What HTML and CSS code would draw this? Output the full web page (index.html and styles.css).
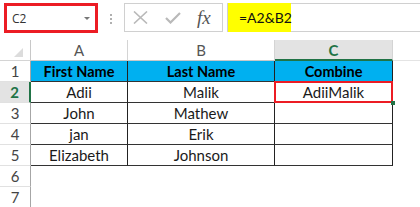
FILE: index.html
```html
<!DOCTYPE html>
<html lang="en">
<head>
  <meta charset="UTF-8" />
  <title>Combine cells</title>
  <link rel="stylesheet" href="styles.css">
</head>
<body>
  <div class="toolbar">
    <div class="namebox"><span>C2</span><i class="caret"></i></div>
    <div class="grip"><i></i><i></i><i></i></div>
    <div class="fxbox">
      <svg class="ico-x" width="15" height="13" viewBox="0 0 15 13"><path d="M1 0.5 L14 12.5 M14 0.5 L1 12.5" stroke="#b9b9b9" stroke-width="1.6" fill="none"/></svg>
      <svg class="ico-ok" width="16" height="12" viewBox="0 0 16 12"><path d="M1 6 L5.5 10.5 L15 1" stroke="#b9b9b9" stroke-width="2.2" fill="none"/></svg>
      <span class="fx">fx</span>
    </div>
    <div class="formula"><span class="hl">=A2&amp;B2</span></div>
  </div>

  <div class="sheet">
    <div class="corner"><i></i></div>
    <div class="ch">A</div>
    <div class="ch">B</div>
    <div class="ch active">C</div>
    <div class="ch blank"></div>

    <div class="rh">1</div>
    <div class="cell head">First Name</div>
    <div class="cell head">Last Name</div>
    <div class="cell head">Combine</div>
    <div class="off"></div>

    <div class="rh active">2</div>
    <div class="cell">Adii</div>
    <div class="cell">Malik</div>
    <div class="cell sel">AdiiMalik</div>
    <div class="off"></div>

    <div class="rh">3</div>
    <div class="cell">John</div>
    <div class="cell">Mathew</div>
    <div class="cell"></div>
    <div class="off"></div>

    <div class="rh">4</div>
    <div class="cell">jan</div>
    <div class="cell">Erik</div>
    <div class="cell"></div>
    <div class="off"></div>

    <div class="rh">5</div>
    <div class="cell">Elizabeth</div>
    <div class="cell">Johnson</div>
    <div class="cell"></div>
    <div class="off"></div>

    <div class="rh">6</div>
    <div class="off"></div><div class="off"></div><div class="off"></div><div class="off"></div>

    <div class="rh">7</div>
    <div class="off"></div><div class="off"></div><div class="off"></div><div class="off"></div>
  </div>
</body>
</html>
```

FILE: styles.css
```css
body {
  margin: 0;
  width: 420px;
  height: 207px;
  overflow: hidden;
  background: #fff;
  font-family: "Lato", "Liberation Sans", sans-serif;
  color: #222;
}
.toolbar {
  display: flex;
  align-items: flex-start;
  height: 40px;
  padding-top: 3px;
  box-sizing: border-box;
}
.namebox {
  display: flex;
  align-items: center;
  box-sizing: border-box;
  margin-left: 4px;
  width: 94px;
  height: 30px;
  border: 3px solid #ec1c24;
  padding-left: 5px;
  font-family: "Open Sans", sans-serif;
  font-size: 12px;
  color: #333;
}
.caret {
  margin-left: auto;
  margin-right: 5px;
  border-left: 3px solid transparent;
  border-right: 3px solid transparent;
  border-top: 3px solid #777;
}
.grip {
  display: flex;
  flex-direction: column;
  gap: 2px;
  margin: 11px 0 0 12px;
}
.grip i {
  width: 2px;
  height: 2px;
  background: #b0b0b0;
}
.fxbox {
  display: flex;
  align-items: center;
  box-sizing: border-box;
  margin-left: 12px;
  width: 99px;
  height: 29px;
  border: 1px solid #d0d0d0;
  padding-left: 8px;
}
.ico-ok {
  margin-left: 17px;
}
.fx {
  margin-left: 16px;
  font-family: "Liberation Serif", serif;
  font-style: italic;
  font-size: 19px;
  color: #555;
}
.formula {
  display: flex;
  box-sizing: border-box;
  margin-left: 4px;
  flex: 1;
  height: 29px;
  border: 1px solid #d0d0d0;
  border-right: none;
}
.hl {
  display: flex;
  align-items: center;
  width: 63px;
  margin: -1px 0;
  padding-left: 11px;
  box-sizing: border-box;
  background: #ffff00;
  font-size: 14px;
  color: #111;
}
.sheet {
  display: grid;
  grid-template-columns: 31px 97px 147px 118px 27px;
  grid-auto-rows: 21px;
  font-size: 15px;
}
.sheet > div {
  box-sizing: border-box;
  display: flex;
  align-items: center;
  justify-content: center;
}
.corner {
  border-right: 1px solid #c8c8c8;
  border-bottom: 1px solid #d4d4d4;
}
.corner i {
  margin: 4px 0 0 6px;
  border-left: 9px solid transparent;
  border-bottom: 9px solid #dcdcdc;
}
.ch {
  color: #555;
  border-right: 1px solid #d4d4d4;
  border-bottom: 1px solid #c8c8c8;
}
.ch.active {
  background: #e3e3e3;
  color: #217346;
  font-weight: 700;
  border-bottom: 2px solid #217346;
}
.ch.blank {
  border: none;
  border-bottom: 1px solid #e4e4e4;
}
.rh {
  color: #444;
  border-right: 1px solid #a6a6a6;
  border-bottom: 1px solid #e1e1e1;
}
.rh.active {
  background: #e3e3e3;
  color: #217346;
  font-weight: 700;
  border-right: 2px solid #217346;
}
.cell {
  border-right: 1px solid #222;
  border-bottom: 1px solid #333;
  color: #1a1a1a;
}
.cell.head {
  background: #00b0f0;
  font-weight: 700;
  font-size: 14.5px;
  color: #000;
}
.cell.sel {
  position: relative;
}
.cell.sel::after {
  content: '';
  position: absolute;
  top: -1px;
  left: -1px;
  right: -1px;
  bottom: -1px;
  border: 2px solid #ec1c24;
}
.cell.sel::before {
  content: '';
  position: absolute;
  right: -3px;
  bottom: -3px;
  width: 4px;
  height: 4px;
  background: #217346;
  z-index: 1;
}
```
